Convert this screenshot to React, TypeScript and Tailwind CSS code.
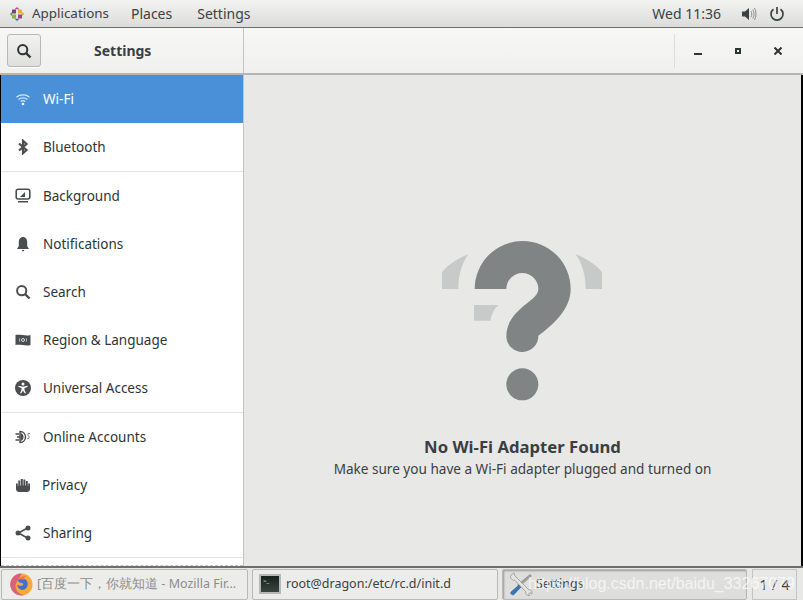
import React from 'react';

const ui = "font-['Noto_Sans','Open_Sans',sans-serif]";

function Row({icon, label, selected = false, labelGap = 'ml-3'}: {icon: React.ReactNode; label: string; selected?: boolean; labelGap?: string}) {
    return (
        <div className={`flex h-12 items-center pl-[14px] text-[13.500px] ${selected ? 'bg-[#4a90d9] text-white' : 'bg-white text-[#2e3436]'}`}>
            <span className="-mt-px flex w-4 justify-center">{icon}</span>
            <span className={labelGap}>{label}</span>
        </div>
    );
}

const Sep = () => <div className="h-px bg-[#e3e3e2]"/>;

const g = '#4b4d4e';

const WifiIcon = () => (
    <svg width="16" height="16" viewBox="0 0 16 16" fill="none" stroke="#d6e6f7" strokeWidth="1.3">
        <path d="M1.5 6.2C5 3.2 11 3.2 14.5 6.2"/>
        <path d="M3.6 8.4C6 6.4 10 6.4 12.4 8.4"/>
        <path d="M5.7 10.5C7 9.5 9 9.5 10.3 10.5"/>
        <circle cx="8" cy="13" r="1.3" fill="#fff" stroke="none"/>
    </svg>
);
const BluetoothIcon = () => (
    <svg width="16" height="16" viewBox="0 0 16 16" fill="none" stroke={g} strokeWidth="2.2">
        <path d="M4 4.5L11.5 11L8 14.2V1.8L11.5 5L4 11.5"/>
    </svg>
);
const BackgroundIcon = () => (
    <svg width="16" height="16" viewBox="0 0 16 16" fill="none">
        <rect x="1.2" y="1.2" width="13.6" height="9.8" rx="2" stroke={g} strokeWidth="1.6"/>
        <path d="M5 9L10 4V9Z" fill={g}/>
        <rect x="3" y="13" width="10" height="1.5" fill={g}/>
    </svg>
);
const BellIcon = () => (
    <svg width="16" height="16" viewBox="0 0 16 16" fill={g}>
        <path d="M8 1C10.800 1 12.200 3.500 12.200 6V10L14 13H2L3.800 10V6C3.800 3.500 5.200 1 8 1Z"/>
        <rect x="6.800" y="14" width="2.400" height="1.200" rx="0.600"/>
    </svg>
);
const SearchIcon = ({color = g}: {color?: string}) => (
    <svg width="16" height="16" viewBox="0 0 16 16" fill="none" stroke={color} strokeWidth="2">
        <circle cx="6.700" cy="6.700" r="4.600"/>
        <path d="M10 10L14.500 14.500" strokeWidth="2.400"/>
    </svg>
);
const RegionIcon = () => (
    <svg width="16" height="16" viewBox="0 0 16 16" fill="none">
        <path d="M0.500 3C5 2 11 4.500 15.500 3V13C11 14.500 5 12 0.500 13Z" fill={g}/>
        <circle cx="8" cy="8" r="1.500" stroke="#fff" strokeWidth="0.800"/>
        <path d="M4.800 6.200A4 4 0 0 0 4.800 9.800M11.200 6.200A4 4 0 0 1 11.200 9.800" stroke="#c9c9c9" strokeWidth="0.800"/>
    </svg>
);
const AccessIcon = () => (
    <svg width="16" height="16" viewBox="0 0 16 16">
        <circle cx="8" cy="8" r="8" fill={g}/>
        <circle cx="8" cy="4" r="1.500" fill="#fff"/>
        <path d="M3.500 5.800L8 6.800L12.500 5.800V7L9.500 8V10L11 13.200H9.700L8 10.500L6.300 13.200H5L6.500 10V8L3.500 7Z" fill="#fff"/>
    </svg>
);
const OnlineIcon = () => (
    <svg width="16" height="16" viewBox="0 0 16 16" fill="none" stroke={g}>
        <path d="M0.500 5H4M0.500 11H4M2 8H5" strokeWidth="1.400"/>
        <path d="M5 2.500C8.500 2.500 10.500 5 10.500 8S8.500 13.500 5 13.500Z" strokeWidth="1.400"/>
        <path d="M5.500 4V12C7.500 11.500 8.500 10 8.500 8S7.500 4.500 5.500 4Z" fill={g} stroke="none"/>
        <path d="M15 4.500C13.500 4 12.500 5 13 6.200C13.500 7.200 14.500 7.500 14 9C13.600 10 12.600 9.800 12 9.400" strokeWidth="0.800"/>
    </svg>
);
const HandIcon = () => (
    <svg width="16" height="16" viewBox="0 0 16 16" fill={g}>
        <path d="M1 6.500H2.800V9H3.300V3.500H5.200V8.500H5.800V2H7.800V8.500H8.400V2.500H10.300V8.500H10.900V4H12.800V9.200H13.200V6.500H15V12C15 14 13.500 15 12 15H4C2.500 15 1 14 1 12Z"/>
    </svg>
);
const ShareIcon = () => (
    <svg width="16" height="16" viewBox="0 0 16 16" fill={g} stroke={g}>
        <path d="M3.500 8L12.500 3M3.500 8L12.500 13" strokeWidth="1.600" fill="none"/>
        <circle cx="3" cy="8" r="2.500" stroke="none"/>
        <circle cx="13" cy="3" r="2.500" stroke="none"/>
        <circle cx="13" cy="13" r="2.500" stroke="none"/>
    </svg>
);

const MenuLogo = () => (
    <svg width="16" height="16" viewBox="0 0 16 16" className="shrink-0">
        <rect x="9" y="3.500" width="4" height="4" fill="#e8b32a"/>
        <rect x="3" y="3.500" width="4" height="4" fill="#7f3f85"/>
        <rect x="3" y="8.500" width="4" height="4" fill="#8fb339"/>
        <rect x="9" y="8.500" width="4" height="4" fill="#a8407f"/>
        <path d="M0.800 8L3 6V10Z" fill="#5fa04e"/>
        <path d="M15.200 8L13 6V10Z" fill="#d9a52b"/>
        <path d="M8 15L5.500 12.800H10.500Z" fill="#3c6fb0"/>
        <path d="M8 1L5.500 3.200H10.500Z" fill="#b54f9a"/>
    </svg>
);

const FirefoxIcon = () => (
    <svg width="23" height="23" viewBox="0 0 24 24" className="shrink-0">
        <circle cx="12" cy="12" r="11.500" fill="#f5a83c"/>
        <path d="M12 .5A11.500 11.500 0 0 0 2 18C5 23 11 24 15 23C9 22 5 18 6 12C7 8 10 6 12 .5Z" fill="#d9627a"/>
        <path d="M8 8C10 5 16 5 18 9C19.500 13 17 17.500 13 17.500C9.500 17.500 7.500 15 8 12C10 14 13 14 14 12C14 10.500 11 10.500 10 10Z" fill="#3f6fd6"/>
        <path d="M10 6C12 3.500 15 3 17 4C15 4.500 14 6 14 7.500C12.500 7 11 6.500 10 6Z" fill="#f2733a"/>
    </svg>
);
const TerminalIcon = () => (
    <div className="box-border flex h-[20px] w-[22px] shrink-0 flex-col border-2 border-[#b5b8b6] bg-gradient-to-b from-[#16211d] to-[#3a4440] pl-[2px] pt-[2px] text-[6px] leading-[6px] text-white">
        <span className={ui}>&gt;_</span>
    </div>
);
const ToolsIcon = () => (
    <svg width="24" height="24" viewBox="0 0 24 24" className="shrink-0">
        <path d="M21 2L23 4L10 15L8 13Z" fill="#9a9c9a"/>
        <path d="M10 13L12 15L5 22.500C3.500 23.500 1 22 2 20Z" fill="#3c74b8" stroke="#23507f" strokeWidth="0.500"/>
        <path d="M2 3L5 1L6 4L8 6L20 18C22 17.500 23.500 19.500 23 22L21 20.500L19.500 22L21 23.500C18 24 16 22 17 20L5.500 8C3 8.500 .5 6 2 3Z" fill="#e4e5e2" stroke="#8a8c8a" strokeWidth="0.700"/>
    </svg>
);

function TaskButton({children, active = false, width}: {children: React.ReactNode; active?: boolean; width: string}) {
    return (
        <div className={`flex h-[31px] items-center overflow-hidden whitespace-nowrap rounded-[2px] border border-[#b8b8b6] pl-[6px] text-[12.500px] ${width} ${active ? 'bg-[#dededc] shadow-[inset_1px_1px_2px_#9a9a98]' : 'bg-[#ececea]'}`}>
            {children}
        </div>
    );
}

export default function App() {
    return (
        <div className={`${ui} relative flex h-[600px] w-[803px] flex-col overflow-hidden bg-black text-[#2e3436]`}>
            {/* top bar */}
            <div className="flex h-7 shrink-0 items-center border-b border-[#6d6e6d] bg-gradient-to-b from-[#f2f2f0] to-[#dcdcda] pl-[9px] pr-[18px] text-[14px] text-[#3c4143]">
                <MenuLogo/>
                <span className="ml-[7px] text-[13.400px]">Applications</span>
                <span className="ml-[22px]">Places</span>
                <span className="ml-[25px]">Settings</span>
                <span className="ml-auto">Wed 11:36</span>
                <svg className="ml-[20px]" width="16" height="16" viewBox="0 0 16 16" fill="none" stroke="#8f9191">
                    <path d="M1 5.500H4L8 2V14L4 10.500H1Z" fill="#3c4143" stroke="none"/>
                    <path d="M10 5C11 6.500 11 9.500 10 11"/>
                    <path d="M11.800 3.500C13.500 6 13.500 10 11.800 12.500"/>
                    <path d="M13.500 2C15.500 5.500 15.500 10.500 13.500 14"/>
                </svg>
                <svg className="ml-[12px]" width="16" height="16" viewBox="0 0 16 16" fill="none" stroke="#3c4143" strokeWidth="1.700">
                    <path d="M8 1V8"/>
                    <path d="M4.500 3.200A6 6 0 1 0 11.500 3.200"/>
                </svg>
            </div>

            {/* title bar */}
            <div className="flex h-[47px] shrink-0 border-b-2 border-[#b5b5b2] bg-gradient-to-b from-[#f7f7f6] to-[#f0f0ee]">
                <div className="flex w-[244px] shrink-0 items-center border-r border-[#c4c4c1] pl-[7px]">
                    <div className="flex h-[33px] w-[34px] items-center justify-center rounded-[3px] border border-[#b8b8b5] bg-gradient-to-b from-[#f2f2f0] to-[#dfdfdc] shadow-[0_1px_0_#ffffff]">
                        <SearchIcon color="#2e3436"/>
                    </div>
                    <span className="ml-[53px] text-[14px] font-bold text-[#3a3f41]">Settings</span>
                </div>
                <div className="flex flex-1 items-center justify-end">
                    <div className="h-[34px] w-px bg-[#dcdcda]"/>
                    <div className="flex w-[128px] items-center text-[#2e3436]">
                        <span className="ml-[19px] mt-[7px] h-[2px] w-2 bg-[#2e3436]"/>
                        <span className="ml-[33px] h-[6px] w-[6px] border-2 border-[#2e3436]"/>
                        <svg className="ml-[33px]" width="8" height="8" viewBox="0 0 8 8" stroke="#2e3436" strokeWidth="2">
                            <path d="M.5 .5L7.500 7.500M7.500 .5L.5 7.500"/>
                        </svg>
                    </div>
                </div>
            </div>

            {/* window body */}
            <div className="flex min-h-0 flex-1 pl-px pr-[2px]">
                <div className="w-[242px] shrink-0 bg-white">
                    <Row selected icon={<WifiIcon/>} label="Wi-Fi"/>
                    <Row icon={<BluetoothIcon/>} label="Bluetooth"/>
                    <Sep/>
                    <Row icon={<BackgroundIcon/>} label="Background"/>
                    <Row icon={<BellIcon/>} label="Notifications"/>
                    <Row icon={<SearchIcon/>} label="Search"/>
                    <Row icon={<RegionIcon/>} label="Region & Language"/>
                    <Row icon={<AccessIcon/>} label="Universal Access"/>
                    <Sep/>
                    <Row icon={<OnlineIcon/>} label="Online Accounts"/>
                    <Row icon={<HandIcon/>} label="Privacy" labelGap="ml-[11px]"/>
                    <Row icon={<ShareIcon/>} label="Sharing"/>
                    <Sep/>
                    <div className="mt-[7px] border-t border-dashed border-[#c4c4c2]"/>
                </div>
                <div className="flex flex-1 flex-col items-center border-l border-[#c4c4c1] bg-[#e8e8e7] pt-[154px]">
                    <svg width="180" height="180" viewBox="0 0 540 540" className="mr-[6px]">
                        <path d="M36 180V130C55 105 85 88 115 75C95 105 85 140 85 180Z" fill="#c8cac9"/>
                        <path d="M516 180V130C497 105 467 88 437 75C457 105 467 140 467 180Z" fill="#c8cac9"/>
                        <path d="M132 228H205C192 240 184 257 181 275H132Z" fill="#c8cac9"/>
                        <path d="M134 180A144 144 0 0 1 422 180C422 240 372 285 325 320A48 48 0 0 1 229 322C229 270 270 240 295 220C312 206 325 195 325 180A48 48 0 0 0 229 180Z" fill="#808484"/>
                        <circle cx="277" cy="466" r="48" fill="#808484"/>
                    </svg>
                    <div className="mt-[26px] text-[16.700px] font-bold leading-6 text-[#3a3f41]">No Wi-Fi Adapter Found</div>
                    <div className="text-[13.570px] leading-5 text-[#3a3f41]">Make sure you have a Wi-Fi adapter plugged and turned on</div>
                </div>
            </div>

            {/* task bar */}
            <div className="flex h-[34px] shrink-0 items-center gap-1 border-t-2 border-[#6d6e6d] bg-[#e8e8e6] pl-px">
                <TaskButton width="w-[247px]">
                    <span className="ml-[2px]"><FirefoxIcon/></span>
                    <span className="ml-[4px] text-[#8b8d8d]">[百度一下，你就知道 - Mozilla Fir...</span>
                </TaskButton>
                <TaskButton width="w-[246px]">
                    <TerminalIcon/>
                    <span className="ml-[5px] text-[#3c4143]">root@dragon:/etc/rc.d/init.d</span>
                </TaskButton>
                <TaskButton active width="w-[245px]">
                    <ToolsIcon/>
                    <span className="ml-[3px] text-[#3c4143]">Settings</span>
                </TaskButton>
                <div className="ml-px flex h-[31px] w-[45px] items-center justify-center border border-[#c4c4c2] text-[15px] text-[#3c4143]">1 / 4</div>
            </div>

            {/* csdn watermark */}
            <div className="pointer-events-none absolute left-[528px] top-[572px] whitespace-nowrap font-['Liberation_Sans',sans-serif] text-[16px] text-white/70">
                https://blog.csdn.net/baidu_33267079
            </div>
        </div>
    );
}
